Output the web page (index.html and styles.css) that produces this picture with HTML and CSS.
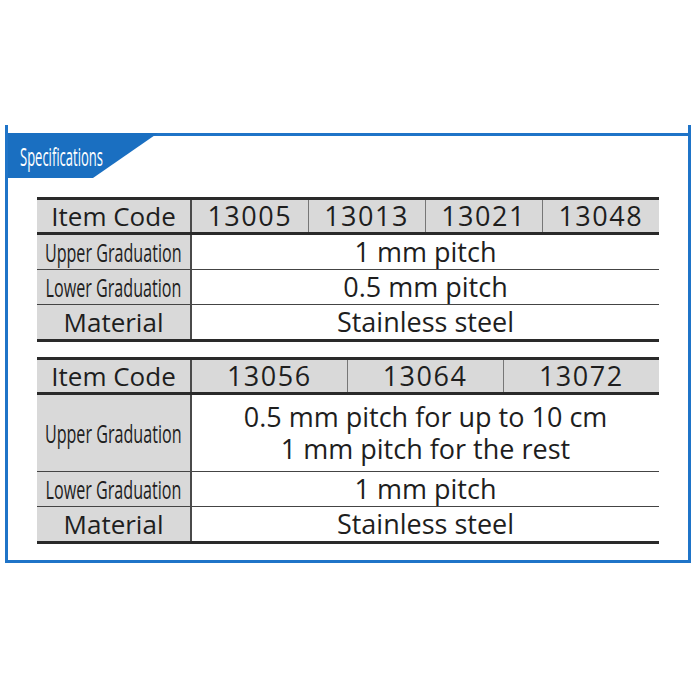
FILE: index.html
```html
<!DOCTYPE html>
<html>
<head>
<meta charset="utf-8">
<link rel="stylesheet" href="styles.css">
</head>
<body>
<div class="frame">
  <div class="tab"><span class="tab-text">Specifications</span></div>
  <table class="spec t4">
    <colgroup><col class="c-label"><col><col><col><col></colgroup>
    <tr class="head">
      <th class="label">Item Code</th>
      <th class="code">13005</th>
      <th class="code">13013</th>
      <th class="code">13021</th>
      <th class="code">13048</th>
    </tr>
    <tr>
      <th class="label"><div class="cond"><span>Upper Graduation</span></div></th>
      <td colspan="4">1 mm pitch</td>
    </tr>
    <tr>
      <th class="label"><div class="cond"><span>Lower Graduation</span></div></th>
      <td colspan="4">0.5 mm pitch</td>
    </tr>
    <tr class="last">
      <th class="label">Material</th>
      <td colspan="4">Stainless steel</td>
    </tr>
  </table>
  <table class="spec t3">
    <colgroup><col class="c-label"><col><col><col></colgroup>
    <tr class="head">
      <th class="label">Item Code</th>
      <th class="code">13056</th>
      <th class="code">13064</th>
      <th class="code">13072</th>
    </tr>
    <tr class="tall">
      <th class="label"><div class="cond"><span>Upper Graduation</span></div></th>
      <td colspan="3" class="two"><div>0.5 mm pitch for up to 10 cm</div><div>1 mm pitch for the rest</div></td>
    </tr>
    <tr>
      <th class="label"><div class="cond"><span>Lower Graduation</span></div></th>
      <td colspan="3">1 mm pitch</td>
    </tr>
    <tr class="last">
      <th class="label">Material</th>
      <td colspan="3">Stainless steel</td>
    </tr>
  </table>
</div>
</body>
</html>
```

FILE: styles.css
```css
html, body {
  margin: 0;
  padding: 0;
  background: #ffffff;
}

body {
  font-family: "Open Sans", "Noto Sans", sans-serif;
  color: #1e1e1e;
}

.frame {
  box-sizing: border-box;
  width: 686px;
  height: 438px;
  margin: 125px 0 0 5px;
  padding-top: 8px;
  border-left: 3px solid #1f74c8;
  border-right: 3px solid #1f74c8;
  border-bottom: 3px solid #1f74c8;
  display: flex;
  flex-direction: column;
}

.tab {
  height: 45px;
  border-top: 3px solid #1f74c8;
  box-sizing: border-box;
  position: relative;
}

.tab::before {
  content: "";
  position: absolute;
  left: 0;
  top: -3px;
  width: 150px;
  height: 45px;
  background: #1a6fc1;
  clip-path: polygon(0 0, 150px 0, 85px 100%, 0 100%);
}

.tab-text {
  position: relative;
  display: inline-block;
  margin: 5px 0 0 12px;
  color: #ffffff;
  font-size: 26px;
  line-height: 30px;
  transform: scaleX(0.5);
  transform-origin: left center;
  white-space: nowrap;
}

.spec {
  margin: 19px 0 0 29px;
  width: 622px;
  table-layout: fixed;
  border-collapse: collapse;
  border-top: 3px solid #2a2a2a;
  border-bottom: 3px solid #2a2a2a;
  font-size: 27px;
  font-weight: normal;
}

.t3 {
  margin-top: 15px;
}

.c-label {
  width: 154px;
}

.spec th,
.spec td {
  padding: 0;
  height: 34px;
  line-height: 32px;
  text-align: center;
  font-weight: normal;
  border-bottom: 1px solid #444444;
  white-space: nowrap;
}

.spec .label {
  background: #d9d9d9;
  border-right: 2px solid #4a4a4a;
  font-size: 26px;
}

.spec .head th {
  background: #d9d9d9;
  border-bottom: 3px solid #2a2a2a;
  height: 32px;
}

.spec .code {
  border-right: 1px solid #777777;
  letter-spacing: 1.5px;
  font-size: 27px;
}

.spec .code:last-child {
  border-right: none;
}

.spec .last th,
.spec .last td {
  border-bottom: none;
}

.spec .tall td,
.spec .tall th {
  height: 76px;
}

.spec .two {
  line-height: 32px;
}

.cond {
  display: flex;
  justify-content: center;
}

.cond span {
  flex-shrink: 0;
  display: inline-block;
  font-size: 26px;
  transform: scaleX(0.62);
  transform-origin: center;
}
```
